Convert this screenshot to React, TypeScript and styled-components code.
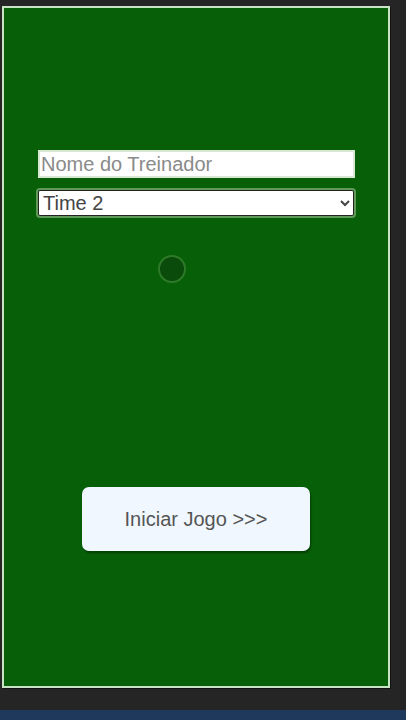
import React from "react";
import styled, { createGlobalStyle } from "styled-components";

const Global = createGlobalStyle`
  html, body { margin: 0; padding: 0; background: #252526; }
  body { font-family: "Liberation Sans", Arial, sans-serif; }
`;

const Page = styled.div`
  width: 406px;
  height: 720px;
  display: flex;
  flex-direction: column;
  background: #252526;
  overflow: hidden;
`;

const Panel = styled.div`
  box-sizing: border-box;
  margin: 6px 0 0 2px;
  width: 388px;
  height: 682px;
  background: #075f07;
  border: 2px solid #c9e3c5;
  box-shadow: 1px 1px 0 #111;
  display: flex;
  flex-direction: column;
  padding: 142px 0 0 34px;
`;

const Input = styled.input`
  box-sizing: border-box;
  width: 317px;
  height: 28px;
  border: 2px solid #d9e8d6;
  background: #fff;
  padding: 0 1px;
  font-family: "Liberation Sans", Arial, sans-serif;
  font-size: 20px;
  color: #333;
  outline: none;
  &::placeholder { color: #8a8a8a; }
`;

const Select = styled.select`
  box-sizing: border-box;
  margin-top: 12px;
  width: 316px;
  height: 26px;
  border: 1px solid #222;
  outline: 2px solid #5f9a5a;
  border-radius: 2px;
  background: #fff;
  font-family: "Liberation Sans", Arial, sans-serif;
  font-size: 20px;
  line-height: 22px;
  color: #444;
  padding: 0;
`;

const Dot = styled.div`
  margin: 39px 0 0 120px;
  width: 24px;
  height: 24px;
  border-radius: 50%;
  background: #0a4a0a;
  border: 2px solid #2e7a2a;
`;

const Button = styled.button`
  margin: 204px 0 0 44px;
  width: 228px;
  height: 64px;
  border: none;
  border-radius: 7px;
  background: #f0f7fe;
  box-shadow: 1px 2px 2px rgba(0,0,0,0.35);
  font-family: "Liberation Sans", Arial, sans-serif;
  font-size: 20px;
  color: #555;
  cursor: pointer;
`;

const BottomBar = styled.div`
  margin-top: 22px;
  height: 10px;
  background: #1e395c;
`;

export default function App() {
  return (
    <Page>
      <Global />
      <Panel>
        <Input placeholder="Nome do Treinador" />
        <Select defaultValue="Time 2">
          <option>Time 1</option>
          <option>Time 2</option>
          <option>Time 3</option>
        </Select>
        <Dot />
        <Button>Iniciar Jogo &gt;&gt;&gt;</Button>
      </Panel>
      <BottomBar />
    </Page>
  );
}
